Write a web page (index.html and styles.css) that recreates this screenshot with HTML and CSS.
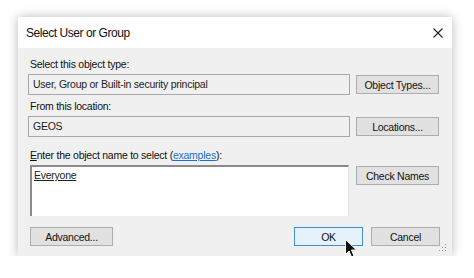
FILE: index.html
```html
<!DOCTYPE html>
<html lang="en">
<head>
  <meta charset="UTF-8" />
  <title>Select User or Group</title>
  <link rel="stylesheet" href="styles.css">
</head>
<body>

  <div class="dialog">
    <div class="titlebar">
      <span class="title">Select User or Group</span>
      <svg class="close" width="10" height="10" viewBox="0 0 10 10">
        <path d="M0.5 0.5 L9.5 9.5 M9.5 0.5 L0.5 9.5" stroke="#222" stroke-width="1.1" fill="none" />
      </svg>
    </div>

    <div class="content">
      <div class="label">Select this object type:</div>
      <div class="row">
        <div class="field">User, Group or Built-in security principal</div>
        <button class="btn">Object Types...</button>
      </div>

      <div class="label">From this location:</div>
      <div class="row">
        <div class="field">GEOS</div>
        <button class="btn">Locations...</button>
      </div>

      <div class="label label-names"><u>E</u>nter the object name to select (<a class="link">examples</a>):</div>
      <div class="row row-names">
        <div class="names"><u>Everyone</u></div>
        <button class="btn">Check Names</button>
      </div>

      <div class="footer">
        <button class="btn btn-adv">Advanced...</button>
        <div class="actions">
          <button class="btn btn-ok">OK</button>
          <button class="btn">Cancel</button>
        </div>
      </div>
    </div>

    <!-- size grip -->
    <svg class="grip" width="8" height="8" viewBox="0 0 8 8">
      <rect x="6" y="0" width="1" height="1" fill="#999" />
      <rect x="3" y="3" width="1" height="1" fill="#999" />
      <rect x="6" y="3" width="1" height="1" fill="#999" />
      <rect x="0" y="6" width="1" height="1" fill="#999" />
      <rect x="3" y="6" width="1" height="1" fill="#999" />
      <rect x="6" y="6" width="1" height="1" fill="#999" />
    </svg>

    <!-- mouse pointer over OK -->
    <svg class="pointer" width="13" height="20" viewBox="0 0 13 20">
      <path d="M0.5 0.5 L0.5 15.5 L4 12 L6.5 18 L9 17 L6.5 11 L11.5 11 Z" fill="#111" stroke="#fff" stroke-width="1" />
    </svg>
  </div>

</body>
</html>
```

FILE: styles.css
```css
body {
  margin: 0;
  background-color: #fff;
  font-family: 'Liberation Sans', Arial, sans-serif;
  font-size: 10.5px;
  letter-spacing: -0.25px;
  color: #000;
  padding: 17px 0 0 18px;
}

.dialog {
  position: relative;
  width: 434px;
  height: 239px;
  background-color: #f0f0f0;
  box-shadow: 0 0 10px rgba(0, 0, 0, 0.28);
  display: flex;
  flex-direction: column;
}

.titlebar {
  height: 31px;
  background-color: #fff;
  display: flex;
  align-items: center;
  justify-content: space-between;
  padding: 0 9px 0 8px;
}

.title {
  font-size: 12px;
  letter-spacing: -0.45px;
  color: #111;
}

.content {
  padding: 9px 13px 0 10px;
  display: flex;
  flex-direction: column;
}

.label {
  height: 14px;
  line-height: 14px;
  margin-left: 2px;
  color: #111;
}

.label-names {
  margin-top: 7px;
}

.row {
  display: flex;
  justify-content: space-between;
  align-items: flex-start;
  margin-top: 3px;
  margin-bottom: 4px;
}

.field {
  width: 322px;
  height: 21px;
  box-sizing: border-box;
  border: 1px solid #a8a8a8;
  background-color: #f0f0f0;
  padding: 3px 0 0 4px;
  line-height: 13px;
  color: #222;
}

.btn {
  width: 83px;
  height: 19px;
  margin-top: 1px;
  box-sizing: border-box;
  border: 1px solid #adadad;
  background-color: #e1e1e1;
  font-family: 'Liberation Sans', Arial, sans-serif;
  font-size: 10.5px;
  letter-spacing: -0.25px;
  color: #111;
  padding: 0;
}

.row-names {
  margin-bottom: 0;
}

.names {
  width: 319px;
  height: 51px;
  margin-left: 2px;
  box-sizing: border-box;
  background-color: #fff;
  border-top: 2px solid #8a8a8a;
  border-left: 2px solid #8a8a8a;
  border-right: 1px solid #e3e3e3;
  padding: 2px 0 0 2px;
  line-height: 13px;
  color: #222;
}

.link {
  color: #1a6fd0;
  text-decoration: underline;
}

.footer {
  display: flex;
  justify-content: space-between;
  margin-top: 10px;
  margin-left: 2px;
}

.btn-adv {
  width: 83px;
}

.actions {
  display: flex;
  gap: 8px;
  margin-right: -1px;
}

.actions .btn {
  width: 69px;
}

.btn-ok {
  background-color: #e5f1fb;
  border-color: #3b8fd9;
}

.grip {
  position: absolute;
  right: 5px;
  bottom: 4px;
}

.pointer {
  position: absolute;
  left: 327px;
  top: 222px;
}
```
